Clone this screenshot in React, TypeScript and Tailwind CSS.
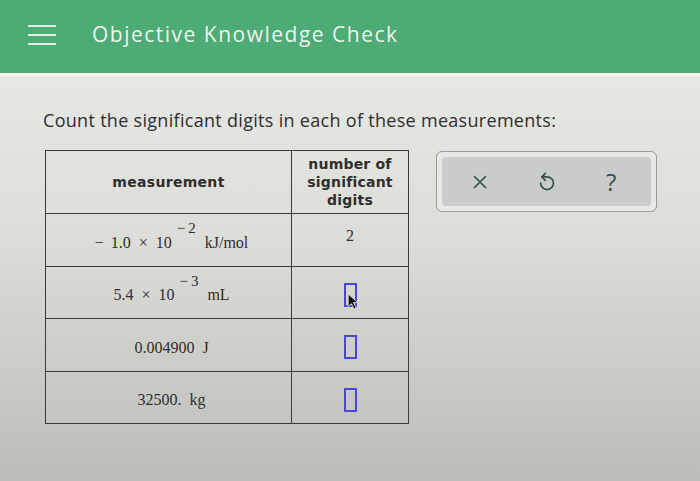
import React from 'react';

type Row = {
  id: string;
  value: React.ReactNode;
  answer?: string;
  pointer?: boolean;
};

const Sci = ({ mant, exp, unit, neg }: { mant: string; exp: string; unit: string; neg?: boolean }) => (
  <span className="inline-flex items-end">
    {neg && <span className="mr-[7px]">−</span>}
    <span>{mant}</span>
    <span className="mx-[8px]">×</span>
    <span>10</span>
    <span className="relative -top-[15px] ml-[5px] mr-[9px] text-[15px]">−&thinsp;{exp}</span>
    <span>{unit}</span>
  </span>
);

const rows: Row[] = [
  { id: 'a', value: <Sci neg mant="1.0" exp="2" unit="kJ/mol" />, answer: '2' },
  { id: 'b', value: <Sci mant="5.4" exp="3" unit="mL" />, pointer: true },
  { id: 'c', value: <span>0.004900&nbsp; J</span> },
  { id: 'd', value: <span>32500.&nbsp; kg</span> },
];

const AnswerBox = ({ pointer }: { pointer?: boolean }) => (
  <span className="relative top-[2px] inline-block h-[24px] w-[13px] border-2 border-[#4848d4] align-middle">
    {pointer && (
      <svg className="absolute left-[1px] top-[8px]" width="13" height="17" viewBox="0 0 12 16">
        <path d="M1 1 L1 13 L4 10 L6.5 15 L8.5 14 L6 9 L10 9 Z" fill="#111" stroke="#ddd" strokeWidth="0.8" />
      </svg>
    )}
  </span>
);

export default function App() {
  return (
    <div className="flex h-[481px] w-[700px] flex-col overflow-hidden bg-gradient-to-b from-[#ecece9] via-[#dcdcd8] to-[#bdbdb8] font-['Open_Sans',sans-serif]">
      {/* Header */}
      <div className="flex h-[73px] items-center bg-[#4dab76] pb-[4px] pl-[28px]">
        <div className="flex w-[28px] flex-col gap-[7px]">
          <span className="h-[2px] bg-[#e2ede6]" />
          <span className="h-[2px] bg-[#e2ede6]" />
          <span className="h-[2px] bg-[#e2ede6]" />
        </div>
        <h1 className="ml-[36px] text-[21px] font-medium tracking-[1.5px] text-[#eef4ee]">
          Objective Knowledge Check
        </h1>
      </div>
      <div className="h-[3px] bg-[#f3f3f0]" />

      <div className="px-[43px] pt-[31px]">
        <p className="text-[18px] tracking-[0.3px] text-[#2f2f2f]">Count the significant digits in each of these measurements:</p>

        <div className="mt-[16px] flex items-start">
          <table className="ml-[2px] w-[366px] border-collapse border-[1.5px] border-[#3c3c3c] text-[#2e2e2e]">
            <thead className="font-['DejaVu_Sans',sans-serif]">
              <tr className="h-[63px]">
                <th className="w-[246px] border-[1.5px] border-[#3c3c3c] text-[14px] font-bold tracking-[0.3px]">measurement</th>
                <th className="border-[1.5px] border-[#3c3c3c] text-[14px] font-bold leading-[18px] tracking-[0.2px]">
                  number of
                  <br />
                  significant
                  <br />
                  digits
                </th>
              </tr>
            </thead>
            <tbody className="font-['Liberation_Serif',serif] text-[16px]">
              {rows.map((r) => (
                <tr key={r.id} className="h-[52.5px]">
                  <td className="border-[1.5px] border-[#3c3c3c] pl-[6px] pt-[6px] text-center">{r.value}</td>
                  <td className="border-[1.5px] border-[#3c3c3c] text-center">
                    {r.answer ? (
                      <span className="relative -top-[4px]">{r.answer}</span>
                    ) : (
                      <AnswerBox pointer={r.pointer} />
                    )}
                  </td>
                </tr>
              ))}
            </tbody>
          </table>

          <div className="ml-[27px] mt-[1px] rounded-[6px] border-[1.5px] border-[#9a9a98] bg-[#e8e8e6] p-[5px]">
            <div className="flex h-[49px] w-[209px] items-center rounded-[4px] bg-[#c9cccb] pl-[31px] text-[#35524f]">
              <svg width="14" height="14" viewBox="0 0 14 14" fill="none" stroke="currentColor" strokeWidth="1.7" strokeLinecap="round">
                <path d="M1.5 1.5 L12.5 12.5 M12.5 1.5 L1.5 12.5" />
              </svg>
              <svg className="ml-[50px]" width="19" height="22" viewBox="0 0 16 19" fill="none" stroke="currentColor" strokeWidth="1.5" strokeLinecap="round" strokeLinejoin="round">
                <path d="M4 5 H8.5 A5.5 5.5 0 1 1 3 10.5" />
                <path d="M7 2 L4 5 L7 8" />
              </svg>
              <span className="ml-[50px] text-[24px] leading-none">?</span>
            </div>
          </div>
        </div>
      </div>
    </div>
  );
}
